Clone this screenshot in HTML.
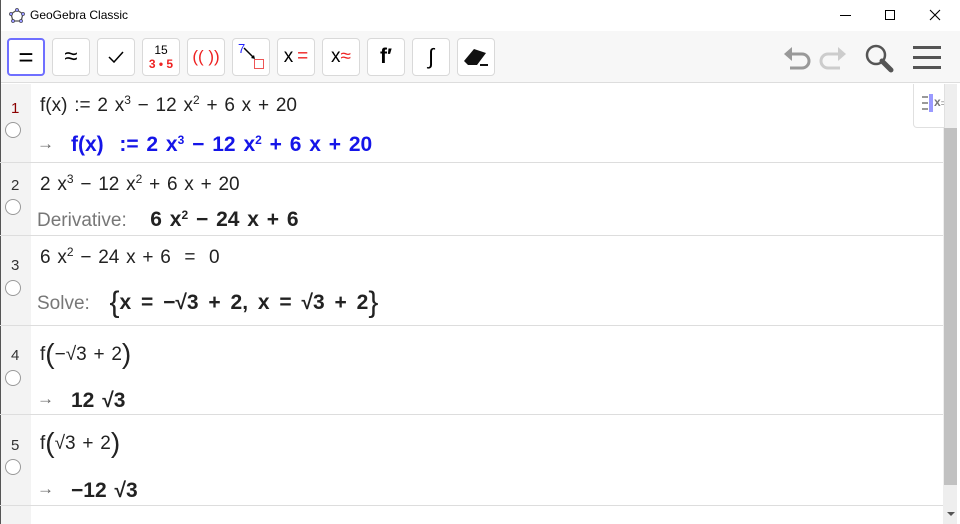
<!DOCTYPE html>
<html><head><meta charset="utf-8"><style>
*{margin:0;padding:0;box-sizing:border-box}
body{width:960px;height:524px;overflow:hidden;background:#fff;font-family:"Liberation Sans",sans-serif;position:relative}
.a{position:absolute}
.btn{position:absolute;top:38px;width:38px;height:38px;border:1px solid #d9d9d9;border-radius:4px;background:#fff;display:flex;align-items:center;justify-content:center;font-size:20px}
.num{position:absolute;left:11px;font-size:15px;color:#333}
.circ{position:absolute;left:5px;width:16px;height:16px;border:1px solid #999;border-radius:50%;background:#fff}
.sep{position:absolute;left:0;width:943px;height:1px;background:#ddd}
.in{position:absolute;left:40px;font-family:"Liberation Sans",sans-serif;font-size:19px;color:#222;white-space:nowrap;word-spacing:1.5px}
.out{position:absolute;font-family:"Liberation Sans",sans-serif;font-weight:bold;font-size:21px;color:#222;white-space:nowrap;word-spacing:2px}
sup{font-size:12px;vertical-align:7px}
.lab{font-family:"Liberation Sans",sans-serif;font-weight:normal;color:#777;font-size:19px;word-spacing:0}
.arr{position:absolute;left:37px;color:#666;font-size:17px;font-weight:bold}
</style></head><body>
<div class="a" style="left:0;top:0;width:1px;height:524px;background:#555"></div>
<svg class="a" style="left:9px;top:8px" width="16" height="16"><path d="M8 2L14 6L12 13L4 13L2 6Z" fill="none" stroke="#555" stroke-width="1.3"/><circle cx="8" cy="2" r="1.6" fill="#99f" stroke="#333" stroke-width=".6"/><circle cx="14" cy="6" r="1.6" fill="#99f" stroke="#333" stroke-width=".6"/><circle cx="12" cy="13" r="1.6" fill="#99f" stroke="#333" stroke-width=".6"/><circle cx="4" cy="13" r="1.6" fill="#99f" stroke="#333" stroke-width=".6"/><circle cx="2" cy="6" r="1.6" fill="#99f" stroke="#333" stroke-width=".6"/></svg>
<div class="a" style="left:30px;top:8px;font-size:12px;color:#000">GeoGebra Classic</div>
<div class="a" style="left:840px;top:15px;width:11px;height:1px;background:#000"></div>
<div class="a" style="left:885px;top:10px;width:10px;height:10px;border:1px solid #000"></div>
<svg class="a" style="left:929px;top:9px" width="12" height="12"><path d="M1 1L11 11M11 1L1 11" stroke="#000" stroke-width="1.1"/></svg>
<div class="a" style="left:1px;top:31px;width:959px;height:52px;background:#f7f7f7;border-bottom:1px solid #ddd"></div>
<div class="btn" style="left:7px;border:2px solid #6f6fff"><span style="font-size:26px;line-height:1">=</span></div>
<div class="btn" style="left:52px"><span style="font-size:24px">≈</span></div>
<div class="btn" style="left:97px"><svg width="16" height="12"><path d="M1 6L6 11L15 1" fill="none" stroke="#000" stroke-width="1.5"/></svg></div>
<div class="btn" style="left:142px;flex-direction:column;font-size:12px;line-height:14px"><span>15</span><span style="color:#e22;font-weight:bold">3 • 5</span></div>
<div class="btn" style="left:187px;color:#e22;font-size:17px">(( ))</div>
<div class="btn" style="left:232px"><span class="a" style="left:5px;top:2px;color:#22f;font-size:13px">7</span><span class="a" style="left:21px;top:20px;width:10px;height:10px;border:1px solid #e55"></span><svg class="a" style="left:10px;top:8px" width="14" height="14"><path d="M1 1L11 11" stroke="#000" stroke-width="1.5"/><path d="M8 11L12 12L11 8Z" fill="#000"/></svg></div>
<div class="btn" style="left:277px;font-size:19px">x<span style="color:#e22">&thinsp;=</span></div>
<div class="btn" style="left:322px;font-size:19px">x<span style="color:#e22">≈</span></div>
<div class="btn" style="left:367px;font-size:21px;font-weight:bold">f′</div>
<div class="btn" style="left:412px;font-size:22px">∫</div>
<div class="btn" style="left:457px"><svg width="28" height="22"><path d="M2 15L12 3L24 7L15 19L6 19Z" fill="#111"/><rect x="18" y="18" width="8" height="2" fill="#111"/></svg></div>
<svg class="a" style="left:782px;top:44px" width="30" height="28"><path d="M5 10H20A7 7 0 0 1 20 24H8" fill="none" stroke="#999" stroke-width="3"/><path d="M2 10L10 3V17Z" fill="#999"/></svg>
<svg class="a" style="left:818px;top:44px" width="30" height="28"><path d="M25 10H10A7 7 0 0 0 10 24H22" fill="none" stroke="#ccc" stroke-width="3"/><path d="M28 10L20 3V17Z" fill="#ccc"/></svg>
<svg class="a" style="left:864px;top:43px" width="32" height="30"><circle cx="12" cy="12" r="9" fill="none" stroke="#555" stroke-width="2.5"/><path d="M18 18L27 27" stroke="#555" stroke-width="5" stroke-linecap="round"/></svg>
<div class="a" style="left:913px;top:46px;width:28px;height:3px;background:#555"></div>
<div class="a" style="left:913px;top:56px;width:28px;height:3px;background:#555"></div>
<div class="a" style="left:913px;top:66px;width:28px;height:3px;background:#555"></div>
<div class="a" style="left:1px;top:84px;width:30px;height:440px;background:#f3f3f3"></div>
<div class="a" style="left:943px;top:84px;width:14px;height:440px;background:#eee"></div>
<div class="a" style="left:944px;top:128px;width:13px;height:357px;background:#c1c1c1"></div>
<div class="a" style="left:913px;top:84px;width:32px;height:44px;background:#fff;border:1px solid #e0e0e0;border-top:none;border-radius:0 0 0 4px;overflow:hidden"><div class="a" style="left:8px;top:12px;width:6px;height:2px;background:#999;box-shadow:0 6px #999,0 12px #999"></div><div class="a" style="left:15px;top:10px;width:4px;height:18px;background:#9a9aff"></div><div class="a" style="left:20px;top:11px;font-size:12px;font-weight:bold;color:#777">x<span style="font-size:9px;font-weight:normal">=</span></div></div>
<div class="a" style="left:947px;top:512px;width:0;height:0;border-left:4px solid transparent;border-right:4px solid transparent;border-top:4px solid #555"></div>

<div class="num" style="top:100px;color:#8b0000">1</div><div class="circ" style="top:122px"></div>
<div class="in" style="top:93px">f(x) := 2 x<sup>3</sup> − 12 x<sup>2</sup> + 6 x + 20</div>
<div class="arr" style="top:134px">→</div>
<div class="out" style="left:71px;top:133px;color:#1515e8">f(x)&nbsp; := 2 x<sup>3</sup> − 12 x<sup>2</sup> + 6 x + 20</div>
<div class="sep" style="top:162px"></div>

<div class="num" style="top:177px">2</div><div class="circ" style="top:199px"></div>
<div class="in" style="top:172px">2 x<sup>3</sup> − 12 x<sup>2</sup> + 6 x + 20</div>
<div class="out" style="left:37px;top:208px"><span class="lab">Derivative:</span>&nbsp;&nbsp; 6 x<sup>2</sup> − 24 x + 6</div>
<div class="sep" style="top:235px"></div>

<div class="num" style="top:257px">3</div><div class="circ" style="top:280px"></div>
<div class="in" style="top:245px">6 x<sup>2</sup> − 24 x + 6&nbsp; =&nbsp; 0</div>
<div class="out" style="left:37px;top:286px;word-spacing:4px"><span class="lab">Solve:</span>&nbsp; <span style="font-weight:normal;font-size:30px;vertical-align:-3px">{</span>x = −√3 + 2, x = √3 + 2<span style="font-weight:normal;font-size:30px;vertical-align:-3px">}</span></div>
<div class="sep" style="top:325px"></div>

<div class="num" style="top:347px">4</div><div class="circ" style="top:370px"></div>
<div class="in" style="top:338px">f<span style="font-size:28px;font-weight:lighter;vertical-align:-3px">(</span>−√3 + 2<span style="font-size:28px;vertical-align:-3px">)</span></div>
<div class="arr" style="top:389px">→</div>
<div class="out" style="left:71px;top:389px">12 √3</div>
<div class="sep" style="top:414px"></div>

<div class="num" style="top:437px">5</div><div class="circ" style="top:459px"></div>
<div class="in" style="top:427px">f<span style="font-size:28px;vertical-align:-3px">(</span>√3 + 2<span style="font-size:28px;vertical-align:-3px">)</span></div>
<div class="arr" style="top:479px">→</div>
<div class="out" style="left:71px;top:479px">−12 √3</div>
<div class="sep" style="top:505px"></div>
</body></html>
